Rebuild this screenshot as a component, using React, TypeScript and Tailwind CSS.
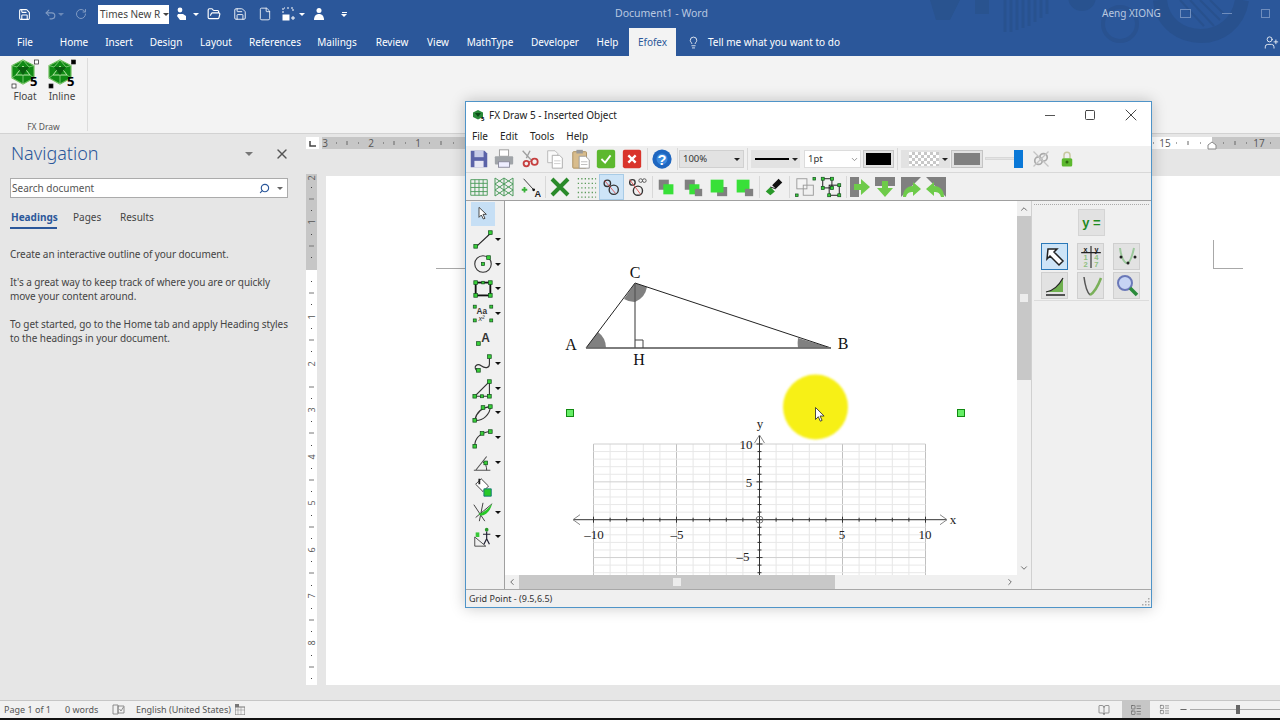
import React from 'react';
import {
  Save, Undo2, RotateCw, FolderOpen, File as FileIcon, ChevronDown, X, Minus, Square, Lightbulb, UserPlus, Search, BookOpen, LayoutList,
} from 'lucide-react';

// ---------- small helpers ----------
const Caret = ({ className = '' }: { className?: string }) => (
  <span className={`inline-block w-0 h-0 border-l-[3px] border-r-[3px] border-t-[3px] border-l-transparent border-r-transparent border-t-current ${className}`} />
);

const Ico = ({ s = 22, vb = '0 0 24 24', children }: { s?: number; vb?: string; children: React.ReactNode }) => (
  <svg width={s} height={s} viewBox={vb} fill="none">{children}</svg>
);

// green handle used all over the FX Draw tool icons
const H = ({ x, y, r = 1.6 }: { x: number; y: number; r?: number }) => (
  <rect x={x - r} y={y - r} width={r * 2} height={r * 2} fill="#38d038" stroke="#14501e" strokeWidth="0.8" />
);

const FxLogo = ({ solid }: { solid: boolean }) => (
  <svg width="30" height="33" viewBox="0 0 30 33" className="overflow-visible">
    <polygon points="13,2 24,7.5 24,20 13,26 2,20 2,7.5" fill="#0f8a14" stroke="#6fbf5f" strokeWidth="1.2" />
    <polygon points="13,8 20,17 6,17" fill="none" stroke="#b8e8a8" strokeWidth="1" />
    <polygon points="7,9 19,9 13,17" fill="#0a5f0f" />
    <path d="M13 2 7 9M13 2l6 7M2 7.5 7 9M24 7.5 19 9M2 20l4-3M24 20l-4-3M13 26v-9" stroke="#a8dc98" strokeWidth="0.7" />
    <rect x="24.5" y="2" width="4" height="4" fill={solid ? '#000' : '#fff'} stroke="#222" strokeWidth="0.7" />
    <rect x="2" y="26" width="4" height="4" fill={solid ? '#000' : '#fff'} stroke="#222" strokeWidth="0.7" />
    <text x="20" y="28" fontSize="13" fontWeight="700" fontFamily="'Open Sans', sans-serif" fill="#000">5</text>
  </svg>
);

// ---------- Word chrome ----------
const tabs: [string, string][] = [
  ['File', 'w-[50px]'], ['Home', 'w-[48px]'], ['Insert', 'w-[42px]'], ['Design', 'w-[52px]'], ['Layout', 'w-[48px]'], ['References', 'w-[70px]'],
  ['Mailings', 'w-[54px]'], ['Review', 'w-[56px]'], ['View', 'w-[36px]'], ['MathType', 'w-[68px]'], ['Developer', 'w-[62px]'], ['Help', 'w-[43px]'],
];

const TitleDecor = () => (
  <svg className="absolute right-0 top-0" width="360" height="56" viewBox="920 0 360 56" fill="none">
    <path d="M1005 0v32M1011 0v32M1017 0v30M1023 0v28M1029 0v26M1035 0v22M1041 0v18M1047 0v14" stroke="#28528f" strokeWidth="3" />
    <circle cx="1120" cy="24" r="17" stroke="#295290" strokeWidth="4" />
    <circle cx="1082" cy="-3" r="14" fill="#28528f" />
    <path d="M1160 0c2 24 22 36 41 36s37-12 41-36" stroke="#28518e" strokeWidth="14" />
    <path d="M1180 0l24 26M1190 0l24 26M1200 0l20 20M1210 0l14 14" stroke="#28518e" strokeWidth="2" />
    <path d="M930 0h30l-10 20h-14zM975 0h14v14h-14z" fill="#29538f" />
  </svg>
);

const TitleBar = () => (
  <div className="relative h-[28px] flex items-center text-white">
    <TitleDecor />
    <div className="relative flex items-center h-full">
      <div className="w-[44px] pl-[4px] flex justify-center"><Save size={13} strokeWidth={2} /></div>
      <div className="w-[13px] flex justify-center opacity-40"><Undo2 size={13} /></div>
      <Caret className="opacity-30 ml-[1px] mr-[8px]" />
      <div className="w-[18px] flex justify-center opacity-40"><RotateCw size={12} /></div>
      <div className="w-[71px] ml-[8px] h-[19px] bg-white text-[#444] text-[10px] flex items-center pl-[2px] gap-[3px] whitespace-nowrap">
        Times New R<Caret className="text-[#444]" />
      </div>
      <div className="w-[24px] flex justify-center">
        <svg width="12" height="14" viewBox="0 0 12 14" fill="#fff"><circle cx="5" cy="3" r="2.4" /><path d="M3 7h5l3 2v4H5L2 9z" /></svg>
      </div>
      <Caret className="mr-[5px]" />
      <div className="w-[20px] flex justify-center"><FolderOpen size={14} /></div>
      <div className="w-[32px] flex justify-center"><Save size={14} strokeWidth={1.5} /></div>
      <div className="w-[18px] flex justify-center"><FileIcon size={14} strokeWidth={1.4} /></div>
      <div className="w-[23px] ml-[8px] flex justify-start items-center gap-[3px]">
        <svg width="14" height="14" viewBox="0 0 14 14" fill="none" stroke="#fff"><path d="M1 6V1h2M5 1h2M9 1h2v3" strokeDasharray="2 1" /><rect x="1" y="8" width="6" height="5" fill="#fff" /><path d="M9 11h4M11 9v4" /></svg>
        <Caret />
      </div>
      <div className="w-[28px] flex justify-center">
        <svg width="12" height="14" viewBox="0 0 12 14" fill="#fff"><circle cx="6" cy="3.5" r="2.5" /><path d="M1 13c0-4 2-6 5-6s5 2 5 6z" /></svg>
      </div>
      <div className="w-[22px] flex flex-col items-center gap-[1px]">
        <span className="w-[5px] h-px bg-white" />
        <Caret />
      </div>
    </div>
    <div className="absolute left-[615px] top-[6px] text-[10.500px] text-[#b9c8e0] whitespace-nowrap">Document1 - Word</div>
    <div className="absolute left-[1102px] top-[6px] text-[10px] text-[#b9c8e0] whitespace-nowrap">Aeng XIONG</div>
    <div className="absolute left-[1180px] top-[9px] w-[11px] h-[9px] border border-[#6f8dbd]" />
    <div className="absolute left-[1222px] top-[13px] w-[10px] h-px bg-[#6f8dbd]" />
    <div className="absolute left-[1261px] top-[9px] w-[9px] h-[9px] border border-[#6f8dbd]" />
  </div>
);

const TabRow = () => (
  <div className="relative h-[28px] flex items-stretch text-[10px] text-white">
    {tabs.map(([name, w]) => (
      <div key={name} className={`${w} flex items-center justify-center`}>{name}</div>
    ))}
    <div className="w-[47px] bg-[#f3f3f3] text-[#2b579a] flex items-center justify-center">Efofex</div>
    <div className="flex items-center ml-[11px] gap-[8px]">
      <Lightbulb size={13} strokeWidth={1.5} />
      <span>Tell me what you want to do</span>
    </div>
    <div className="absolute right-[1px] top-[7px]"><UserPlus size={15} strokeWidth={1.3} /></div>
  </div>
);

const Ribbon = () => (
  <div className="h-[78px] bg-[#f3f3f3] border-b border-[#d2d2d2] flex">
    <div className="w-[88px] border-r border-[#dcdcdc] mt-[2px] mb-[2px] flex flex-col">
      <div className="flex pl-[10px] gap-[7px] h-[62px] shrink-0">
        <div className="flex flex-col items-center w-[30px] text-[10px] text-[#444]"><FxLogo solid={false} /><span className="leading-[10px]">Float</span></div>
        <div className="flex flex-col items-center w-[30px] text-[10px] text-[#444]"><FxLogo solid /><span className="leading-[10px]">Inline</span></div>
      </div>
      <div className="text-center text-[8.500px] leading-[10px] text-[#555] mt-[2px]">FX Draw</div>
    </div>
  </div>
);

const NavPane = () => (
  <div className="w-[302px] bg-[#e6e6e6] pl-[10px] pr-[14px] flex flex-col">
    <div className="flex items-center h-[44px] text-[#2b579a] pb-[5px]">
      <span className="text-[18px] font-light ml-[1px] flex-1">Navigation</span>
      <Caret className="text-[#777] border-l-[4px] border-r-[4px] border-t-[4px] mr-[21px]" />
      <X size={16} className="text-[#555] -mr-[2px]" />
    </div>
    <div className="h-[20px] w-[278px] bg-white border border-[#ababab] flex items-center text-[10px] text-[#555] pl-[1px]">
      <span className="flex-1">Search document</span>
      <Search size={11} strokeWidth={2.5} className="text-[#2b579a] mr-[7px] -scale-x-100" />
      <Caret className="text-[#666] mr-[4px]" />
    </div>
    <div className="flex text-[10px] text-[#444] mt-[12px] h-[19px]">
      <div className="w-[47px] border-b-2 border-[#2b579a] text-[#2b579a] font-bold pl-[1px]">Headings</div>
      <div className="ml-[16px] w-[47px]">Pages</div>
      <div>Results</div>
    </div>
    <div className="text-[10px] leading-[14px] tracking-[-0.07px] text-[#444] whitespace-nowrap mt-[18px] flex flex-col gap-[14px]">
      <p>Create an interactive outline of your document.</p>
      <p>It's a great way to keep track of where you are or quickly<br />move your content around.</p>
      <p>To get started, go to the Home tab and apply Heading styles<br />to the headings in your document.</p>
    </div>
  </div>
);

const HRuler = () => (
  <svg width="958" height="16" viewBox="322 135 958 16" className="block">
    <rect x="322" y="137" width="958" height="12" fill="#c6c6c6" />
    <rect x="465" y="137" width="747" height="12" fill="#fff" />
    <g fontSize="10" fill="#555" fontFamily="'Open Sans', sans-serif" textAnchor="middle">
      <text x="325" y="147">3</text>
      <text x="371" y="147">2</text>
      <text x="418" y="147">1</text>
      <text x="1165" y="147">15</text>
      <text x="1259" y="147">17</text>
    </g>
    <path d="M347 141v4M394 141v4M441 141v4M1188 141v4M1235 141v4" stroke="#666" />
    <path d="M336 143h1M358 143h1M383 143h1M405 143h1M429 143h1M453 143h1M1153 143h1M1176 143h1M1200 143h1M1223 143h1M1246 143h1M1270 143h1" stroke="#555" />
    <path d="M1208 149v-4l4-3 4 3v4z" fill="#fff" stroke="#888" />
  </svg>
);

const VRuler = () => (
  <svg width="15" height="515" viewBox="304 170 15 515" className="block">
    <rect x="306" y="174" width="11" height="96" fill="#c6c6c6" />
    <rect x="306" y="270" width="11" height="415" fill="#fff" />
    <g fontSize="9" fill="#555" fontFamily="'Open Sans', sans-serif" textAnchor="middle">
      {[[2, 178], [1, 222], [1, 317], [2, 364], [3, 410], [4, 457], [5, 503], [6, 550], [7, 596], [8, 643]].map(([n, y], i) => (
        <text key={i} x="311.5" y={y} transform={`rotate(-90 311.5 ${y}) translate(0 3)`}>{n}</text>
      ))}
    </g>
    <path d="M309 199h5M309 246h5M309 293h5M309 340h5M309 387h5M309 433h5M309 480h5M309 527h5M309 573h5M309 620h5M309 667h5" stroke="#777" />
    <path d="M311.5 187v1M311.5 210v1M311.5 234v1M311.5 257v1M311.5 281v1M311.5 304v1M311.5 328v1M311.5 351v1M311.5 398v1M311.5 421v1M311.5 445v1M311.5 468v1M311.5 491v1M311.5 515v1M311.5 538v1M311.5 561v1M311.5 585v1M311.5 608v1M311.5 631v1M311.5 655v1M311.5 678v1" stroke="#444" />
  </svg>
);

const StatusBar = () => (
  <div className="h-[18px] bg-[#f1f1f1] border-t border-[#c6c6c6] flex items-center text-[9px] text-[#555] whitespace-nowrap">
    <span className="ml-[4px] w-[61px]">Page 1 of 1</span>
    <span className="w-[47px]">0 words</span>
    <svg width="13" height="11" viewBox="0 0 13 11" fill="none" stroke="#777" strokeWidth="0.8"><path d="M1 1h5v9H1zM6 2h6v7H6z" /><path d="m7.5 5 1.5 2 2.500-4" /></svg>
    <span className="ml-[11px] w-[99px]">English (United States)</span>
    <svg width="10" height="11" viewBox="0 0 10 11" fill="#777"><rect x="0" y="0" width="4" height="3" /><rect x="0" y="3" width="10" height="8" fill="none" stroke="#777" /><path d="M3 3v8M6 3v8M0 6h10" stroke="#999" strokeWidth="0.6" /></svg>
    <div className="ml-auto flex items-center h-full">
      <div className="w-[32px] pr-[4px] flex justify-center"><BookOpen size={12} strokeWidth={1.2} /></div>
      <div className="w-[28px] h-full bg-[#c6c6c6] flex justify-center items-center"><LayoutList size={12} strokeWidth={1.2} /></div>
      <div className="w-[29px] flex justify-center"><LayoutList size={11} strokeWidth={1.2} /></div>
      <Minus size={9} strokeWidth={3} className="text-[#666] mr-[2px]" />
      <div className="relative w-[90px] h-px bg-[#aaa]">
        <div className="absolute left-[46px] -top-[4px] w-[4px] h-[9px] bg-[#666]" />
      </div>
    </div>
  </div>
);

// ---------- FX Draw toolbar icons ----------
const gridIcon = (
  <Ico><path d="M3 4h18v17H3zM3 8h18M3 12.500h18M3 17h18M7.500 4v17M12 4v17M16.500 4v17" stroke="#4a9a5a" strokeWidth="1" /></Ico>
);
const isoIcon = (
  <Ico s={24}><path d="M3 3v18M12 3v18M21 3v18M3 3l9 6 9-6M3 9l9-6 9 6M3 9l9 6 9-6M3 15l9-6 9 6M3 15l9 6 9-6M3 21l9-6 9 6" stroke="#4a9a5a" strokeWidth="1" /></Ico>
);

const Btn = ({ w = 'w-[25.500px]', active = false, children }: { w?: string; active?: boolean; children: React.ReactNode }) => (
  <div className={`${w} h-[26px] shrink-0 flex items-center justify-center ${active ? 'bg-[#cde4f7] border border-[#a8cbe6]' : ''}`}>{children}</div>
);

const Sep = () => <div className="w-px h-[22px] bg-[#d8d8d8] mx-[2px] shrink-0" />;

const TwoSquares = ({ variant }: { variant: number }) => (
  <Ico>
    {variant === 0 && <><rect x="3" y="4" width="11" height="11" fill="#808080" /><rect x="8" y="9" width="11" height="11" fill="#38e038" /></>}
    {variant === 1 && <><rect x="3" y="4" width="11" height="11" fill="#808080" /><rect x="8" y="9" width="11" height="11" fill="#38e038" /><rect x="14" y="14" width="8" height="8" fill="#808080" /></>}
    {variant === 2 && <><rect x="11" y="12" width="11" height="10" fill="#808080" /><rect x="4" y="4" width="14" height="14" fill="#38e038" /></>}
    {variant === 3 && <><rect x="4" y="4" width="14" height="14" fill="#38e038" /><rect x="13" y="14" width="9" height="8" fill="#808080" /></>}
  </Ico>
);

const MoveRight = (
  <Ico s={24}><path d="M2 2h9v20H2z" fill="#808080" /><path d="M6 9h7V4l9 8-9 8v-5H6z" fill="#6ecb4a" /></Ico>
);
const MoveDown = (
  <Ico s={24}><path d="M2 2h20v9H2z" fill="#808080" /><path d="M9 6v7H4l8 9 8-9h-5V6z" fill="#6ecb4a" /></Ico>
);
const CurveRight = (
  <Ico s={24}><path d="M2 2h20L2 22z" fill="#808080" /><path d="M4 22c0-7 4-11 10-11V7l8 7-8 7v-4c-4 0-6 1-7 5z" fill="#6ecb4a" /></Ico>
);
const CurveLeft = (
  <Ico s={24}><path d="M2 2h20v20z" fill="#808080" /><path d="M20 22c0-7-4-11-10-11V7l-8 7 8 7v-4c4 0 6 1 7 5z" fill="#6ecb4a" /></Ico>
);

const Toolbar1 = () => (
  <div className="h-[27px] bg-[#f0f0f0] border-b border-[#d8d8d8] flex items-center text-[9.500px] text-[#333]">
    <Btn><Ico><path d="M3 3h15l3 3v15H3z" fill="#5b63a8" /><rect x="7" y="3" width="10" height="7" fill="#c8cce8" /><rect x="7" y="14" width="10" height="7" fill="#e8e8f4" /></Ico></Btn>
    <Btn><Ico><rect x="7" y="2" width="10" height="7" fill="#fff" stroke="#999" /><rect x="2" y="9" width="20" height="9" rx="1" fill="#a0a4a8" /><rect x="6" y="15" width="12" height="6" fill="#eef" stroke="#889" /></Ico></Btn>
    <Btn><Ico><path d="M4 3 14 14M12 3 8 11" stroke="#a0a0a0" strokeWidth="1.500" /><circle cx="8" cy="17" r="3" stroke="#c64040" strokeWidth="2" /><circle cx="17" cy="15" r="3.400" stroke="#c64040" strokeWidth="2" /><path d="M11 15 14 14" stroke="#c64040" /></Ico></Btn>
    <Btn><Ico><path d="M4 3h8l3 3v10H4z" fill="#fafafa" stroke="#b8b8b8" /><path d="M9 8h8l3 3v11H9z" fill="#fff" stroke="#a8a8a8" /><path d="M11 14h7M11 17h7" stroke="#ccc" /></Ico></Btn>
    <Btn><Ico><rect x="3" y="4" width="15" height="18" rx="1" fill="#d8bc8c" stroke="#a88c5c" /><rect x="7" y="2" width="7" height="4" fill="#999" /><path d="M10 9h7l4 4v9H10z" fill="#fff" stroke="#999" /><path d="M12 15h7M12 18h7" stroke="#bbb" /></Ico></Btn>
    <Btn><Ico><rect x="2" y="2" width="20" height="20" rx="2" fill="#5cb82e" /><path d="m7 12 4 4 6-8" stroke="#fff" strokeWidth="2" /></Ico></Btn>
    <Btn><Ico><rect x="2" y="2" width="20" height="20" rx="2" fill="#d9342b" /><path d="m8 8 8 8M16 8l-8 8" stroke="#fff" strokeWidth="2.500" /></Ico></Btn>
    <Sep />
    <Btn><Ico><circle cx="12" cy="12" r="10.500" fill="#1e66c0" /><circle cx="12" cy="12" r="6" fill="#3c8ade" /><text x="12" y="18" fontSize="16" fontWeight="700" textAnchor="middle" fill="#fff" fontFamily="'Liberation Sans', sans-serif">?</text></Ico></Btn>
    <Sep />
    <div className="w-[65px] h-[18px] bg-[#e2e2e2] border border-[#d0d0d0] flex items-center pl-[3px] ml-[-1px] shrink-0">
      <span className="flex-1">100%</span><Caret className="text-[#222] mr-[3px]" />
    </div>
    <div className="w-px h-[22px] bg-[#d8d8d8] mx-[3px] shrink-0" />
    <div className="w-[49px] h-[18px] bg-[#e2e2e2] flex items-center pl-[4px] shrink-0">
      <span className="w-[34px] h-[2px] bg-black" /><span className="flex-1" /><Caret className="text-[#222] mr-[2px]" />
    </div>
    <div className="w-[57px] h-[18px] bg-white border border-[#dcdcdc] ml-[4px] flex items-center pl-[3px] shrink-0">
      <span className="flex-1">1pt</span><ChevronDown size={9} className="text-[#777] mr-[1px]" />
    </div>
    <div className="w-[31px] h-[18px] border border-[#c4c4c4] bg-[#e2e2e2] ml-[2px] p-[2px] shrink-0"><div className="w-full h-full bg-black" /></div>
    <div className="w-px h-[22px] bg-[#d8d8d8] mx-[3px] shrink-0" />
    <div className="w-[49px] h-[18px] bg-[#e2e2e2] flex items-center pl-[8px] shrink-0">
      <div className="w-[30px] h-[14px] bg-[repeating-conic-gradient(#c8c8c8_0_25%,#ffffff_0_50%)] bg-[length:6px_6px]" />
      <span className="flex-1" /><Caret className="text-[#222] mr-[2px]" />
    </div>
    <div className="w-[32px] h-[18px] border border-[#c4c4c4] bg-[#e2e2e2] ml-[1px] p-[2px] shrink-0"><div className="w-full h-full bg-[#808080]" /></div>
    <div className="relative w-[40px] h-[18px] shrink-0">
      <div className="absolute left-[2px] right-[6px] top-[7px] h-[3px] bg-[#e4e4e4] border border-[#d8d8d8]" />
      <div className="absolute right-0 top-0 w-[9px] h-[18px] bg-[#0a78d7]" />
    </div>
    <Btn w="w-[26px] ml-[5px]"><Ico s={20}><circle cx="9" cy="14" r="4.500" stroke="#aaa" strokeWidth="2" /><circle cx="15" cy="10" r="4.500" stroke="#aaa" strokeWidth="2" /><path d="M3 3l18 18M21 3 3 21" stroke="#c4c4c4" strokeWidth="1.500" /></Ico></Btn>
    <Btn><Ico s={18}><path d="M8 11V7a4 4 0 0 1 8 0v4" stroke="#c8c8a0" strokeWidth="2" /><rect x="5" y="11" width="14" height="11" rx="2" fill="#5cb82e" /><circle cx="12" cy="16" r="2" fill="#2c6a10" /></Ico></Btn>
  </div>
);

const Toolbar2 = () => (
  <div className="h-[28px] bg-[#f0f0f0] border-b border-[#a0a0a0] flex items-center">
    <Btn>{gridIcon}</Btn>
    <Btn>{isoIcon}</Btn>
    <Btn><Ico><path d="M5 3 16 15" stroke="#333" /><circle cx="16" cy="15" r="1.500" fill="#111" /><path d="M3 15h6M6 12v6" stroke="#38b038" strokeWidth="2" /><text x="17" y="23" fontSize="10" fontWeight="700" fill="#222" fontFamily="'Liberation Sans', sans-serif">A</text></Ico></Btn>
    <Sep />
    <Btn><Ico s={24}><path d="m4 4 16 16M20 4 4 20" stroke="#2a8a2a" strokeWidth="4" /></Ico></Btn>
    <Btn><Ico><path d="M3 3h20M3 8h20M3 13h20M3 18h20M3 23h20" stroke="#5a9a5a" strokeWidth="1.400" strokeDasharray="1.400 2.400" /></Ico></Btn>
    <Btn active><Ico><circle cx="8" cy="8" r="3.500" stroke="#333" strokeWidth="1.500" /><circle cx="15" cy="15" r="5" stroke="#333" strokeWidth="1.500" /><path d="m5 5 12 14" stroke="#e05050" /></Ico></Btn>
    <Btn><Ico><circle cx="7" cy="7" r="3" stroke="#333" strokeWidth="1.500" /><circle cx="13" cy="16" r="5" stroke="#333" strokeWidth="1.500" /><path d="M4 4l12 16" stroke="#e05050" /><circle cx="16" cy="5" r="2" stroke="#555" /><circle cx="20" cy="5" r="2" stroke="#555" /></Ico></Btn>
    <Sep />
    <Btn><TwoSquares variant={0} /></Btn>
    <Btn><TwoSquares variant={1} /></Btn>
    <Btn><TwoSquares variant={2} /></Btn>
    <Btn><TwoSquares variant={3} /></Btn>
    <Sep />
    <Btn><Ico><path d="m3 17 5-5 5 5-5 4z" fill="#2a9a2a" /><path d="m10 10 7-7 4 4-7 7z" fill="#111" /><path d="M8 12 14 14" stroke="#111" /></Ico></Btn>
    <Sep />
    <Btn w="w-[25.500px] ml-[1px]"><Ico><rect x="2" y="3" width="11" height="11" stroke="#999" fill="#f4f4f4" /><rect x="9" y="10" width="11" height="11" stroke="#999" fill="none" /><H x={21} y={3} r={1.400} /><H x={2} y={21} r={1.400} /></Ico></Btn>
    <Btn><Ico><rect x="3" y="3" width="10" height="10" stroke="#111" /><rect x="10" y="10" width="11" height="11" stroke="#111" /><H x={3} y={3} /><H x={13} y={3} /><H x={3} y={13} /><H x={13} y={13} /><H x={21} y={10} /><H x={10} y={21} /><H x={21} y={21} /></Ico></Btn>
    <div className="w-px h-[22px] bg-[#d8d8d8] ml-[2px] shrink-0" />
    <Btn>{MoveRight}</Btn>
    <Btn>{MoveDown}</Btn>
    <Btn>{CurveRight}</Btn>
    <Btn>{CurveLeft}</Btn>
  </div>
);

// ---------- left tool column ----------
const tools: { icon: React.ReactNode; caret?: boolean; active?: boolean }[] = [
  { active: true, icon: <Ico s={16}><path d="m6 2 0 15 3.500-3.500 3 6 2.500-1-3-6h5z" fill="#fff" stroke="#333" strokeWidth="1.300" /></Ico> },
  { caret: true, icon: <Ico><path d="m5 20 15-14" stroke="#222" strokeWidth="1.200" /><H x={4} y={20} r={2} /><H x={20} y={5} r={2} /></Ico> },
  { caret: true, icon: <Ico><circle cx="12" cy="12" r="9" stroke="#333" strokeWidth="1.200" /><H x={12} y={12} /><H x={18} y={5} r={2} /></Ico> },
  { caret: true, icon: <Ico><rect x="4" y="5" width="16" height="14" stroke="#111" strokeWidth="2" /><H x={4} y={5} r={2} /><H x={20} y={5} r={2} /><H x={4} y={19} r={2} /><H x={20} y={19} r={2} /><H x={12} y={5} r={1.400} /></Ico> },
  { caret: true, icon: <Ico><text x="5" y="12" fontSize="9" fontWeight="700" fill="#333" fontFamily="'Liberation Sans', sans-serif">Aa</text><text x="7" y="20" fontSize="8" fontStyle="italic" fill="#333" fontFamily="'Liberation Sans', sans-serif">x²</text><H x={3} y={4} /><H x={21} y={4} /><H x={3} y={19} /><H x={21} y={19} /></Ico> },
  { icon: <Ico><text x="10" y="16" fontSize="13" fontWeight="700" fill="#333" fontFamily="'Liberation Sans', sans-serif">A</text><H x={7} y={18} r={2} /></Ico> },
  { caret: true, icon: <Ico><path d="M6 21C0 16 6 12 10 15s9 3 9-2V7" stroke="#333" strokeWidth="1.200" /><H x={7} y={20} r={2} /><H x={19} y={5} r={2} /></Ico> },
  { caret: true, icon: <Ico><path d="M3 21h16L19 5z" stroke="#333" strokeWidth="1.200" /><H x={3} y={21} r={2} /><H x={19} y={21} r={2} /><H x={19} y={5} r={2} /><H x={11} y={21} r={1.600} /></Ico> },
  { caret: true, icon: <Ico><path d="M3 20C5 10 11 6 20 5c0 8-8 16-17 15z" stroke="#333" strokeWidth="1.200" /><H x={3} y={20} r={2} /><H x={20} y={5} r={2} /><H x={12} y={6} r={2} /></Ico> },
  { caret: true, icon: <Ico><path d="M3 21C3 12 8 7 19 5" stroke="#333" strokeWidth="1.200" /><H x={3} y={21} r={2} /><H x={11} y={7} r={2} /><H x={20} y={5} r={2} /></Ico> },
  { icon: <Ico><path d="M2 21h18M4 21 16 6" stroke="#555" strokeWidth="1.200" /><path d="M12 12c3 2 4 5 4 9" stroke="#333" /><H x={15} y={13} r={2} /></Ico>, caret: true },
  { icon: <Ico><path d="m4 9 6-6 8 8-6 6z" fill="#fff" stroke="#333" /><path d="M13 14h8v8h-8z" fill="#28c828" stroke="#177" /><path d="M8 3v6" stroke="#222" strokeWidth="2" /></Ico> },
  { caret: true, icon: <Ico><path d="M2 4 14 22M12 2 8 22M22 3 4 18" stroke="#333" /><path d="M22 3c-2 8-7 13-13 13l-2-2C13 13 18 8 22 3z" fill="#28c828" /></Ico> },
  { caret: true, icon: <Ico><path d="M3 22V12l12 10z" stroke="#444" fill="none" /><rect x="4" y="7" width="4" height="5" fill="#38c838" /><circle cx="16" cy="4" r="2" fill="#2a9a2a" /><path d="M16 6v8M12 9h8M16 14l-3 6M16 14l3 6" stroke="#223" strokeWidth="1.300" /></Ico> },
];

const ToolColumn = () => (
  <div className="w-[39px] bg-[#f0f0f0] border-r border-[#a0a0a0] flex flex-col pt-[1px] shrink-0">
    {tools.map((t, i) => (
      <div key={i} className="h-[24.800px] flex items-center pl-[2px] relative shrink-0">
        <div className={`w-[24px] h-[24px] ml-[3px] flex items-center justify-center ${t.active ? 'bg-[#c6dff5]' : ''}`}>{t.icon}</div>
        {t.caret && <Caret className="absolute left-[29px] top-[11px] text-[#111]" />}
      </div>
    ))}
  </div>
);

// ---------- drawing area ----------
const serif = "'Liberation Serif', serif";
const OX = 759.5;
const OY = 519.7;
const UX = 16.6;
const UY = 7.57;
const range = (a: number, b: number) => Array.from({ length: b - a + 1 }, (_, i) => a + i);

const Drawing = () => (
  <svg width="512" height="374" viewBox="505 201 512 374" className="block bg-white shrink-0">
    {/* triangle */}
    <path d="M586 348 L606 348 A20 20 0 0 0 598 332 Z" fill="#808080" />
    <path d="M831 348 L798 348 A33 33 0 0 1 798 338 Z" fill="#808080" />
    <path d="M635 283 L624 299 A20 20 0 0 0 635 302 A20 20 0 0 0 647 287 Z" fill="#808080" />
    <path d="M586 348 H831 L635 283 Z" fill="none" stroke="#222" strokeWidth="1" />
    <path d="M586 348H831" stroke="#777" strokeWidth="1.500" />
    <path d="M635 283V348" stroke="#555" strokeWidth="1.200" />
    <path d="M635 340H643V348" stroke="#444" fill="none" />
    <g fontFamily={serif} fontSize="16" fill="#111" textAnchor="middle">
      <text x="635" y="278">C</text>
      <text x="571" y="350">A</text>
      <text x="843" y="349">B</text>
      <text x="639" y="365">H</text>
    </g>
    {/* selection handles */}
    <rect x="566.500" y="409.500" width="7" height="7" fill="#66ee66" stroke="#128a12" />
    <rect x="957.500" y="409.500" width="7" height="7" fill="#66ee66" stroke="#128a12" />
    {/* graph grid */}
    {range(-10, 10).map((i) => (
      <path key={`v${i}`} d={`M${OX + i * UX} 444V575`} stroke={i % 5 === 0 ? '#c0c0c0' : '#e6e6e6'} strokeWidth="1" />
    ))}
    {range(-7, 10).map((i) => (
      <path key={`h${i}`} d={`M593.500 ${OY - i * UY}H925.500`} stroke={i % 5 === 0 ? '#d0d0d0' : '#e8e8e8'} strokeWidth="1" />
    ))}
    {/* axes */}
    <path d={`M573 ${OY}H947M${OX} 435V575`} stroke="#333" strokeWidth="1" />
    <path d={`M580 ${OY - 5}L573 ${OY}L580 ${OY + 5}M940 ${OY - 5}L947 ${OY}L940 ${OY + 5}M${OX - 5} 443L${OX} 435L${OX + 5} 443`} stroke="#888" fill="none" />
    {range(-10, 10).map((i) => (
      <path key={`tx${i}`} d={`M${OX + i * UX} ${OY - (i % 5 === 0 ? 3 : 2)}v${i % 5 === 0 ? 6 : 4}`} stroke="#333" />
    ))}
    {range(-7, 10).map((i) => (
      <path key={`ty${i}`} d={`M${OX - (i % 5 === 0 ? 3 : 2)} ${OY - i * UY}h${i % 5 === 0 ? 6 : 4}`} stroke="#333" />
    ))}
    <circle cx={OX} cy={OY} r="3.500" fill="none" stroke="#777" />
    <g fontFamily={serif} fontSize="13" fill="#222" textAnchor="middle">
      <text x="760" y="428">y</text>
      <text x="953" y="524">x</text>
      <text x="746" y="449">10</text>
      <text x="749" y="487">5</text>
      <text x="743" y="561">–5</text>
      <text x="594" y="539">–10</text>
      <text x="677" y="539">–5</text>
      <text x="842" y="539">5</text>
      <text x="925" y="539">10</text>
    </g>
    {/* presenter's yellow cursor spot */}
    <circle cx="815.500" cy="407" r="32.500" fill="#f7f016" className="blur-[1px]" />
    <path d="M815.500 407.500v12l2.800-2.800 2 4.500 1.800-.8-2-4.400h4z" fill="#fff" stroke="#222" strokeWidth="0.800" />
  </svg>
);

const VScroll = () => (
  <div className="w-[14px] bg-[#f0f0f0] flex flex-col items-center shrink-0">
    <div className="h-[15px] flex items-center"><ChevronDown size={10} strokeWidth={2} className="rotate-180 text-[#555]" /></div>
    <div className="w-full h-[164px] bg-[#c8c8c8] flex items-center justify-center"><div className="w-[8px] h-[8px] bg-[#ececec]" /></div>
    <div className="flex-1" />
    <div className="h-[14px] flex items-center"><ChevronDown size={10} strokeWidth={2} className="text-[#555]" /></div>
  </div>
);

const HScroll = () => (
  <div className="h-[14px] bg-[#f0f0f0] flex items-center shrink-0">
    <div className="w-[14px] flex justify-center"><ChevronDown size={10} strokeWidth={2} className="rotate-90 text-[#555]" /></div>
    <div className="w-[316px] h-full bg-[#c8c8c8] flex items-center justify-center"><div className="w-[8px] h-[8px] bg-[#ececec]" /></div>
    <div className="w-[168px]" />
    <div className="w-[14px] flex justify-center"><ChevronDown size={10} strokeWidth={2} className="-rotate-90 text-[#555]" /></div>
  </div>
);

const PanelBtn = ({ active = false, children }: { active?: boolean; children: React.ReactNode }) => (
  <div className={`w-[27px] h-[27px] flex items-center justify-center border ${active ? 'bg-[#cde4f7] border-[#2a78b8]' : 'bg-[#e2e2e2] border-[#cfcfcf]'}`}>{children}</div>
);

const RightPanel = () => (
  <div className="flex-1 bg-[#f0f0f0] border-l border-[#d0d0d0] flex flex-col px-[2px] pt-[3px]">
    <div className="h-0 border-t border-dotted border-[#aaa]" />
    <div className="flex justify-center mt-[4px]">
      <div className="w-[27px] h-[27px] bg-[#e2e2e2] border border-[#d4d4d4] flex items-center justify-center text-[13px] font-bold text-[#1f8a1f] font-['Liberation_Sans',sans-serif]">y =</div>
    </div>
    <div className="grid grid-cols-[27px_27px_27px] gap-x-[9px] gap-y-[2px] mt-[7px] ml-[7px]">
      <PanelBtn active><Ico s={24}><path d="M5 4h9l-3 3 9 9-4 4-9-9-3 3z" fill="#fff" stroke="#222" strokeWidth="1.500" /></Ico></PanelBtn>
      <PanelBtn>
        <svg width="24" height="24" viewBox="0 0 22 22" fontFamily="'Liberation Sans', sans-serif" fontWeight="700" className="overflow-visible">
          <path d="M2 7h18M11 1v20" stroke="#222" />
          <text x="6" y="6" fontSize="6.500" textAnchor="middle" fill="#222">x</text>
          <text x="16" y="6" fontSize="6.500" textAnchor="middle" fill="#222">y</text>
          <text x="6" y="14" fontSize="7" textAnchor="middle" fill="#8fbf7f">1</text>
          <text x="16" y="14" fontSize="7" textAnchor="middle" fill="#8fbf7f">4</text>
          <text x="6" y="20.500" fontSize="7" textAnchor="middle" fill="#8fbf7f">2</text>
          <text x="16" y="20.500" fontSize="7" textAnchor="middle" fill="#8fbf7f">7</text>
        </svg>
      </PanelBtn>
      <PanelBtn><Ico s={24}><path d="M5 3c1 9 4 15 7 15s5-6 7-15" stroke="#9cc89c" strokeWidth="2" /><circle cx="6" cy="12" r="1.500" fill="#222" /><circle cx="13" cy="18" r="1.500" fill="#222" /><circle cx="20" cy="12" r="1.500" fill="#222" /></Ico></PanelBtn>
      <PanelBtn><Ico s={24}><path d="M3 21h19" stroke="#222" strokeWidth="1.500" /><path d="M3 18c7-1 12-5 17-14v14z" fill="#6fb04f" /><path d="M3 18c7-1 12-5 17-14" stroke="#222" strokeWidth="1.200" /></Ico></PanelBtn>
      <PanelBtn><Ico s={24}><path d="M5 3c1 8 3 15 6 18" stroke="#555" strokeWidth="1.500" /><path d="M22 4c-3 8-6 14-11 17" stroke="#7ab05a" strokeWidth="2.500" /></Ico></PanelBtn>
      <PanelBtn><Ico s={24}><circle cx="10" cy="9" r="7" fill="#c6d4f4" stroke="#6a78b8" strokeWidth="2" /><path d="m15 14 7 7" stroke="#2a8a3a" strokeWidth="3.500" /></Ico></PanelBtn>
    </div>
    <div className="h-px bg-[#dcdcdc] mt-[1px]" />
  </div>
);

const FxWindow = () => (
  <div className="absolute left-[465px] top-[101px] w-[687px] h-[507px] bg-white border border-[#4f94c8] shadow-[0_0_14px_rgba(0,0,0,0.22)] flex flex-col font-['Noto_Sans',sans-serif]">
    <div className="h-[24px] flex items-center text-[10px] text-[#222] shrink-0 pt-[2px]">
      <svg className="ml-[6px] mr-[4px] overflow-visible" width="13" height="13" viewBox="0 0 13 13"><polygon points="6,1 11,3.500 11,8 6,10.500 1,8 1,3.500" fill="#2a8a3a" /><path d="M3 4h6L6 8z" fill="#0c4a16" /><text x="9" y="12" fontSize="6" fontWeight="700">5</text></svg>
      <span>FX Draw 5 - Inserted Object</span>
      <div className="ml-auto flex items-center text-[#333]">
        <div className="w-[41px] flex justify-center"><div className="w-[10px] h-px bg-[#555]" /></div>
        <div className="w-[40px] flex justify-center"><Square size={12} strokeWidth={1.800} /></div>
        <div className="w-[41px] flex justify-center"><X size={20} strokeWidth={1.100} /></div>
      </div>
    </div>
    <div className="h-[20px] flex items-center text-[10px] text-[#222] gap-[12px] pl-[6px] pt-[1px] shrink-0">
      <span>File</span><span>Edit</span><span>Tools</span><span>Help</span>
    </div>
    <Toolbar1 />
    <Toolbar2 />
    <div className="flex h-[388px] shrink-0">
      <ToolColumn />
      <div className="w-[526px] flex flex-col shrink-0">
        <div className="flex h-[374px] shrink-0"><Drawing /><VScroll /></div>
        <HScroll />
      </div>
      <RightPanel />
    </div>
    <div className="flex-1 bg-[#f0f0f0] border-t border-[#a8a8a8] flex items-center pl-[3px] text-[9px] text-[#333] relative">
      Grid Point - (9.5,6.5)
      <svg className="absolute right-[1px] bottom-[1px]" width="9" height="9" viewBox="0 0 9 9" fill="#aaa"><rect x="7" y="1" width="1.500" height="1.500" /><rect x="4" y="4" width="1.500" height="1.500" /><rect x="7" y="4" width="1.500" height="1.500" /><rect x="1" y="7" width="1.500" height="1.500" /><rect x="4" y="7" width="1.500" height="1.500" /><rect x="7" y="7" width="1.500" height="1.500" /></svg>
    </div>
  </div>
);

export default function App() {
  return (
    <div className="relative w-[1280px] h-[720px] overflow-hidden bg-[#e6e6e6] flex flex-col font-['Noto_Sans',sans-serif]">
      <div className="bg-[#2b579a] shrink-0">
        <TitleBar />
        <TabRow />
      </div>
      <Ribbon />
      <div className="flex h-[566px] shrink-0">
        <NavPane />
        <div className="flex-1 flex flex-col bg-[#e6e6e6]">
          <div className="flex items-start pt-[1px] h-[42px] shrink-0 pl-[4px]">
            <div className="w-[13px] h-[12px] mt-[2px] bg-white flex items-end justify-center pb-[2px] mr-[3px]">
              <svg width="7" height="6" viewBox="0 0 7 6"><path d="M1 0v5h6" stroke="#444" strokeWidth="1.500" fill="none" /></svg>
            </div>
            <HRuler />
          </div>
          <div className="flex flex-1">
            <div className="w-[24px] pl-[2px] shrink-0 -mt-[6px]"><VRuler /></div>
            <div className="relative w-[954px] h-[509px] bg-white">
              <div className="absolute left-[110px] top-[92px] w-[30px] h-px bg-[#a8a8a8]" />
              <div className="absolute left-[887px] top-[64px] w-[30px] h-[29px] border-l border-b border-[#a8a8a8]" />
            </div>
          </div>
        </div>
      </div>
      <StatusBar />
      <div className="flex-1 bg-[#111]" />
      <FxWindow />
    </div>
  );
}
